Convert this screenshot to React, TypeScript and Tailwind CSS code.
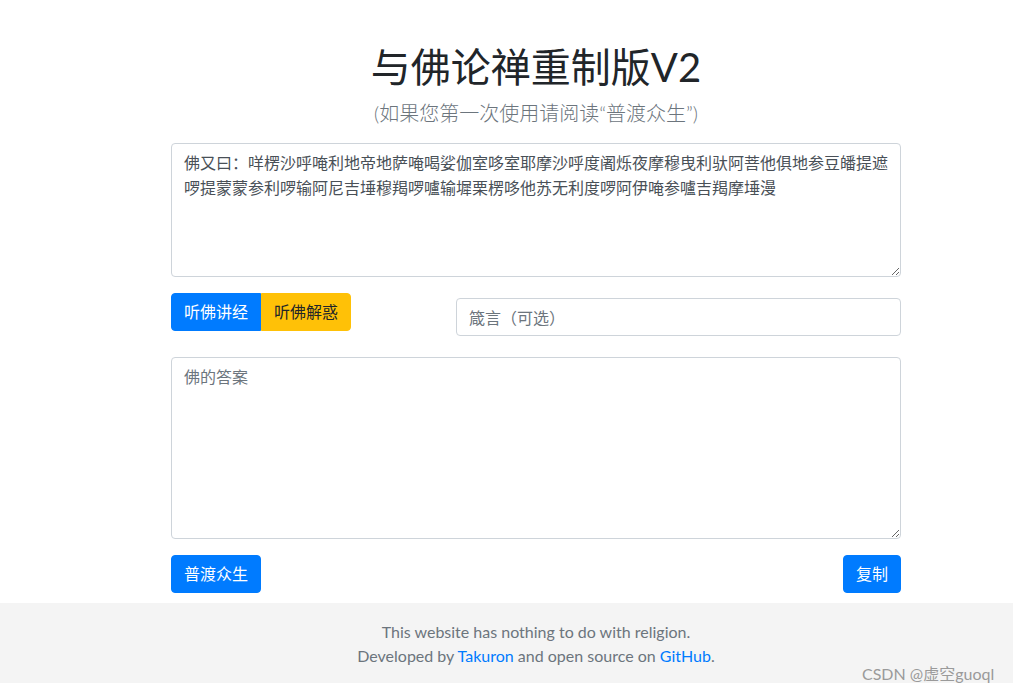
import React from "react";

const line1 =
  "佛又曰：咩楞沙呼唵利地帝地萨唵喝娑伽室哆室耶摩沙呼度阇烁夜摩穆曳利驮阿菩他俱地参豆皤提遮啰提蒙蒙参利啰输阿尼吉埵穆羯啰嚧输墀栗楞哆他苏无利度啰阿伊唵参嚧吉羯摩埵漫";

export default function App() {
  return (
    <div className="relative min-h-[693px] bg-white font-[Lato,'Noto_Sans_CJK_SC',sans-serif] text-[#212529]">
      <main className="ml-[171px] w-[730px] pt-[43px]">
        <h1 className="text-center text-[40px] leading-[48px] font-normal text-[#212529]">
          与佛论禅重制版V2
        </h1>
        <p className="mt-[7px] text-center text-[20px] leading-[30px] font-light text-[#6c757d]">
          (如果您第一次使用请阅读“普渡众生”)
        </p>
        <textarea
          className="mt-[15px] block h-[134px] w-full rounded border border-[#ced4da] px-3 py-[6px] text-[16px] leading-[25px] text-[#495057] outline-none"
          defaultValue={line1}
        />
        <div className="mt-4 flex items-start">
          <div className="flex">
            <button className="h-[38px] rounded-l border border-[#007bff] bg-[#007bff] px-3 text-[16px] leading-6 text-white">
              听佛讲经
            </button>
            <button className="h-[38px] rounded-r border border-[#ffc107] bg-[#ffc107] px-3 text-[16px] leading-6 text-[#212529]">
              听佛解惑
            </button>
          </div>
          <input
            className="mt-[5px] ml-auto h-[38px] w-[445px] rounded border border-[#ced4da] px-3 text-[16px] text-[#495057] outline-none placeholder:text-[#6c757d]"
            placeholder="箴言（可选）"
          />
        </div>
        <textarea
          className="mt-[21px] block h-[182px] w-full rounded border border-[#ced4da] px-3 py-[6px] text-[16px] leading-[25px] text-[#495057] outline-none placeholder:text-[#6c757d]"
          placeholder="佛的答案"
        />
        <div className="mt-4 flex justify-between">
          <button className="h-[38px] rounded border border-[#007bff] bg-[#007bff] px-3 text-[16px] leading-6 text-white">
            普渡众生
          </button>
          <button className="h-[38px] rounded border border-[#007bff] bg-[#007bff] px-3 text-[16px] leading-6 text-white">
            复制
          </button>
        </div>
      </main>
      <footer className="mt-[10px] h-[80px] bg-[#f4f4f4] pt-[17px]">
        <div className="ml-[171px] w-[730px] text-center text-[16px] leading-6 text-[#6c757d]">
          <p>This website has nothing to do with religion.</p>
          <p>
            Developed by <a className="text-[#007bff]" href="#">Takuron</a> and open source on{" "}
            <a className="text-[#007bff]" href="#">GitHub</a>.
          </p>
        </div>
      </footer>
      <div className="absolute left-[862px] top-[664px] text-[16px] leading-5 text-[#9a9a9a]">
        CSDN @虚空guoql
      </div>
    </div>
  );
}
